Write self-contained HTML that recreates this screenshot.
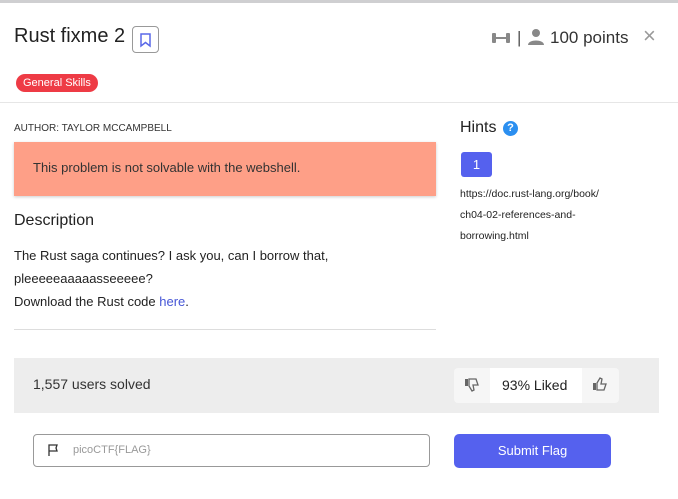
<!DOCTYPE html>
<html><head><style>
*{margin:0;padding:0;box-sizing:border-box}
body{width:678px;height:499px;background:#fff;font-family:"Liberation Sans",sans-serif;color:#212529;position:relative;overflow:hidden}
.a{position:absolute}
</style></head><body>
<div class="a" style="left:0;top:0;width:678px;height:3px;background:#cfcfd1"></div>
<div class="a" style="left:14px;top:25px;font-size:20px;color:#222">Rust fixme 2</div>
<div class="a" style="left:132px;top:26px;width:27px;height:27px;border:1px solid #999;border-radius:4px"><svg width="25" height="25"><path d="M8 7h9v12l-4.5-3.5L8 19z" fill="none" stroke="#5a68e8" stroke-width="1.5"/></svg></div>
<svg class="a" style="left:491px;top:30px" width="20" height="16"><rect x="1" y="3" width="4" height="10" rx="1" fill="#888"/><rect x="15" y="3" width="4" height="10" rx="1" fill="#888"/><rect x="5" y="7" width="10" height="2" fill="#888"/></svg>
<div class="a" style="left:517px;top:28px;font-size:17px;color:#555">|</div>
<svg class="a" style="left:527px;top:28px" width="18" height="18"><circle cx="9" cy="5" r="4" fill="#888"/><path d="M1 17c0-6 16-6 16 0z" fill="#888"/></svg>
<div class="a" style="left:550px;top:28px;font-size:17px;color:#333">100 points</div>
<div class="a" style="left:643px;top:23px;font-size:22px;color:#999">×</div>
<div class="a" style="left:16px;top:74px;padding:0 7px;height:18px;line-height:18px;background:#ee3b45;color:#fff;border-radius:9px;font-size:11px">General Skills</div>
<div class="a" style="left:0;top:102px;width:678px;height:1px;background:#e6e6e6"></div>
<div class="a" style="left:14px;top:123px;font-size:10px;color:#333">AUTHOR: TAYLOR MCCAMPBELL</div>
<div class="a" style="left:14px;top:142px;width:422px;height:54px;background:#fe9f87;box-shadow:0 1px 3px rgba(0,0,0,.2)"><div style="padding:18px 0 0 19px;font-size:13px;color:#333">This problem is not solvable with the webshell.</div></div>
<div class="a" style="left:14px;top:212px;font-size:16px;color:#222">Description</div>
<div class="a" style="left:14px;top:244px;font-size:13px;line-height:23px;color:#222;width:400px">The Rust saga continues? I ask you, can I borrow that, pleeeeeaaaaasseeeee?<br>Download the Rust code <span style="color:#4656d6">here</span>.</div>
<div class="a" style="left:14px;top:329px;width:422px;height:1px;background:#ddd"></div>
<div class="a" style="left:460px;top:119px;font-size:16px;color:#222">Hints</div>
<div class="a" style="left:503px;top:121px;width:15px;height:15px;border-radius:50%;background:#2b8ff0;color:#fff;font-size:11px;font-weight:bold;text-align:center;line-height:15px">?</div>
<div class="a" style="left:461px;top:152px;width:31px;height:25px;background:#5561ee;border-radius:3px;color:#fff;text-align:center;line-height:25px;font-size:13px">1</div>
<div class="a" style="left:460px;top:184px;font-size:10.5px;line-height:21px;color:#222;width:170px">https://doc.rust-lang.org/book/<br>ch04-02-references-and-<br>borrowing.html</div>
<div class="a" style="left:14px;top:358px;width:645px;height:55px;background:#ededed"></div>
<div class="a" style="left:33px;top:376px;font-size:14px;color:#333">1,557 users solved</div>
<div class="a" style="left:454px;top:368px;width:165px;height:35px;background:#f6f6f6;border-radius:4px"></div>
<div class="a" style="left:490px;top:368px;width:92px;height:35px;background:#fff"></div>
<div class="a" style="left:502px;top:377px;font-size:14px;color:#222">93% Liked</div>
<svg class="a" style="left:464px;top:377px" width="16" height="16"><rect x="1" y="2" width="3" height="7" fill="#666"/><path d="M5 2h7l2 6h-5l1 5-2 1-3-5z" fill="none" stroke="#666" stroke-width="1.3"/></svg>
<svg class="a" style="left:592px;top:376px" width="16" height="16"><rect x="1" y="7" width="3" height="7" fill="#666"/><path d="M5 14h7l2-6h-5l1-5-2-1-3 5z" fill="none" stroke="#666" stroke-width="1.3"/></svg>
<div class="a" style="left:33px;top:434px;width:397px;height:33px;border:1px solid #999;border-radius:4px"></div>
<svg class="a" style="left:46px;top:443px" width="14" height="14"><path d="M3 13V2h8l-1 3 1 3H3" fill="none" stroke="#333" stroke-width="1.3"/></svg>
<div class="a" style="left:73px;top:444px;font-size:11px;color:#999">picoCTF{FLAG}</div>
<div class="a" style="left:454px;top:434px;width:157px;height:34px;background:#5561ee;border-radius:5px;color:#fff;text-align:center;line-height:34px;font-size:13px">Submit Flag</div>
</body></html>
